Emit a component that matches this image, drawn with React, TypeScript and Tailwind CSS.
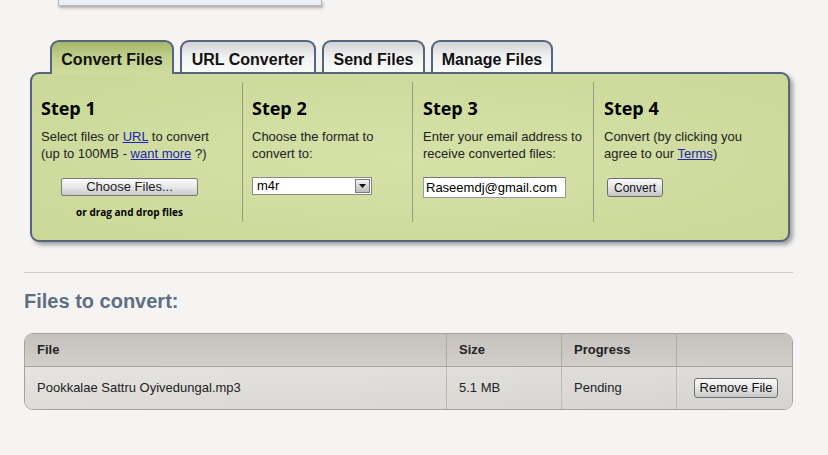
import React from 'react';

const body = "font-['Liberation_Sans',Arial,sans-serif]";
const heading = "font-['Open_Sans',Tahoma,sans-serif] font-bold";

const tabs = [
  { label: 'Convert Files', width: 'w-[124px]', active: true },
  { label: 'URL Converter', width: 'w-[136px]', active: false },
  { label: 'Send Files', width: 'w-[103px]', active: false },
  { label: 'Manage Files', width: 'w-[122px]', active: false },
];

const Tab = ({ label, width, active }: { label: string; width: string; active: boolean }) => (
  <div
    className={
      active
        ? `${width} relative z-10 -mb-[2px] flex h-[34px] items-start justify-center rounded-t-[9px] border-2 border-b-0 border-[#53667c] bg-linear-to-b from-[#a6b668] via-[#c3d18e] to-[#d0dc9f] pt-[9px]`
        : `${width} flex h-[32px] items-start justify-center rounded-t-[9px] border-2 border-b-0 border-[#53667c] bg-linear-to-b from-[#d2d2d6] via-[#f2f2f2] to-[#fafafa] pt-[9px]`
    }
  >
    <span className={`${body} text-[16px] leading-[18px] font-bold text-[#111]`}>{label}</span>
  </div>
);

const StepTitle = ({ children }: { children: React.ReactNode }) => (
  <div className={`${heading} text-[18px] leading-[24px] text-black`}>{children}</div>
);

const StepText = ({ children }: { children: React.ReactNode }) => (
  <div className={`${body} mt-[8px] text-[13px] leading-[17px] text-[#222]`}>{children}</div>
);

const link = 'text-[#2323b4] underline';

export default function App() {
  return (
    <div className="min-h-[455px] w-full bg-[#f5f4f3]">
      {/* bottom edge of the box above */}
      <div className="ml-[58px] h-[6px] w-[264px] border border-t-0 border-[#b4b8bd] bg-[#eaeff5] shadow-[1px_2px_3px_rgba(0,0,0,0.3)]" />

      <div className="ml-[30px] mt-[34px] w-[760px]">
        {/* tabs */}
        <div className="ml-[20px] flex items-end gap-[6px]">
          {tabs.map((t) => (
            <Tab key={t.label} {...t} />
          ))}
        </div>

        {/* green panel */}
        <div className="h-[170px] rounded-[9px] border-2 border-[#53667c] bg-[#cfdb9d] bg-radial from-[#d6e1a8] to-[#cbd898] shadow-[3px_3px_4px_rgba(0,0,0,0.35)]">
          <div className="mt-[8px] flex h-[140px]">
            <div className="w-[210px] pl-[9px] pr-[24px] pt-[14px]">
              <StepTitle>Step 1</StepTitle>
              <StepText>
                Select files or <span className={link}>URL</span> to convert
                <br />
                (up to 100MB - <span className={link}>want more</span> ?)
              </StepText>
              <div className="mt-[16px] flex flex-col items-center">
                <div
                  className={`${body} flex h-[18px] w-[137px] items-center justify-center rounded-[2px] border border-[#7a7a7a] bg-linear-to-b from-[#fbfbfb] via-[#e8e8e8] to-[#c9c9c9] text-[13px] text-[#222]`}
                >
                  Choose Files...
                </div>
                <div className={`${heading} mt-[9px] text-[10px] leading-[14px] text-black`}>
                  or drag and drop files
                </div>
              </div>
            </div>

            <div className="w-[170px] border-l border-[#949d7e] pl-[9px] pt-[14px]">
              <StepTitle>Step 2</StepTitle>
              <StepText>
                Choose the format to
                <br />
                convert to:
              </StepText>
              <div className="mt-[15px] flex h-[18px] w-[120px] items-center border border-[#8a8a8a] bg-white">
                <span className={`${body} flex-1 pl-[4px] text-[13px] leading-[16px] text-black`}>m4r</span>
                <div className="mr-[1px] flex h-[14px] w-[15px] items-center justify-center border border-[#7a7a7a] bg-linear-to-b from-[#f4f4f4] to-[#bdbdbd]">
                  <svg width="7" height="4" viewBox="0 0 7 4">
                    <path d="M0 0h7L3.5 4z" fill="#111" />
                  </svg>
                </div>
              </div>
            </div>

            <div className="w-[181px] border-l border-[#949d7e] pl-[10px] pt-[14px]">
              <StepTitle>Step 3</StepTitle>
              <StepText>
                Enter your email address to
                <br />
                receive converted files:
              </StepText>
              <div
                className={`${body} mt-[15px] flex h-[21px] w-[143px] items-center border border-[#9a9a9a] border-t-[#777] bg-white pl-[2px] text-[13px] text-black`}
              >
                Raseemdj@gmail.com
              </div>
            </div>

            <div className="flex-1 border-l border-[#949d7e] pl-[10px] pt-[14px]">
              <StepTitle>Step 4</StepTitle>
              <StepText>
                Convert (by clicking you
                <br />
                agree to our <span className={link}>Terms</span>)
              </StepText>
              <div
                className={`${body} ml-[3px] mt-[16px] flex h-[19px] w-[56px] items-center justify-center rounded-[3px] border border-[#6e6e6e] bg-linear-to-b from-[#fafafa] via-[#e4e4e4] to-[#c4c4c4] text-[12px] text-[#111]`}
              >
                Convert
              </div>
            </div>
          </div>
        </div>
      </div>

      <div className="mx-[24px] mt-[30px] w-[769px] border-t border-[#cacaca]" />

      <div className={`${body} ml-[24px] mt-[16px] text-[20px] leading-[24px] font-bold text-[#5d6f84]`}>
        Files to convert:
      </div>

      {/* file table */}
      <div className={`${body} ml-[24px] mt-[20px] w-[769px] overflow-hidden rounded-[9px] border border-[#a5a3a0] text-[13px] text-[#222]`}>
        <div className="flex h-[33px] items-center border-b border-[#a5a3a0] bg-linear-to-b from-[#c5c2be] to-[#d2cfcb] font-bold">
          <div className="flex h-full w-[422px] items-center border-r border-[#aeaca9] pl-[12px]">File</div>
          <div className="flex h-full w-[115px] items-center border-r border-[#aeaca9] pl-[12px]">Size</div>
          <div className="flex h-full w-[115px] items-center border-r border-[#aeaca9] pl-[12px]">Progress</div>
          <div className="flex-1" />
        </div>
        <div className="flex h-[42px] items-center bg-linear-to-br from-[#e6e4e1] to-[#d6d4d1]">
          <div className="flex h-full w-[422px] items-center border-r border-[#bdbbb8] pl-[12px]">
            Pookkalae Sattru Oyivedungal.mp3
          </div>
          <div className="flex h-full w-[115px] items-center border-r border-[#bdbbb8] pl-[12px]">5.1 MB</div>
          <div className="flex h-full w-[115px] items-center border-r border-[#bdbbb8] pl-[12px]">Pending</div>
          <div className="flex flex-1 items-center pl-[17px]">
            <div className="flex h-[20px] w-[84px] items-center justify-center rounded-[3px] border border-[#707070] bg-linear-to-b from-[#fafafa] via-[#e6e6e6] to-[#c8c8c8] text-[13px] text-[#111]">
              Remove File
            </div>
          </div>
        </div>
      </div>
    </div>
  );
}
